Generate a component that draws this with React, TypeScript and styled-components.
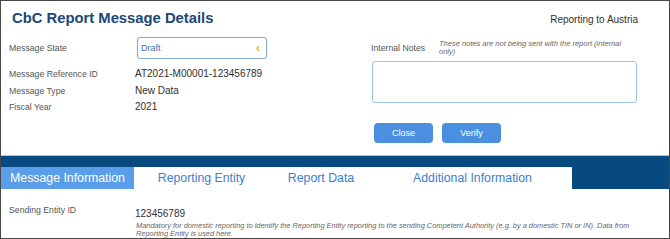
import React from "react";
import styled, { createGlobalStyle } from "styled-components";

const GlobalStyle = createGlobalStyle`
  html, body {
    margin: 0;
    padding: 0;
    background: #ffffff;
    font-family: "Liberation Sans", Arial, sans-serif;
  }
  * {
    box-sizing: border-box;
  }
`;

const colors = {
  navy: "#064a80",
  title: "#1a4877",
  label: "#555555",
  value: "#2f2f2f",
  hint: "#666666",
  tabText: "#3c7ed2",
  tabActive: "#5a9de8",
  button: "#4a8fe0",
};

const Frame = styled.div`
  width: 670px;
  height: 239px;
  border: 1px solid #474747;
  overflow: hidden;
  display: flex;
  flex-direction: column;
`;

const Top = styled.div`
  height: 154px;
  padding: 8px 31px 0 8px;
`;

const Header = styled.div`
  display: flex;
  justify-content: space-between;
  align-items: baseline;
  padding-left: 3px;
`;

const Title = styled.h1`
  margin: 0;
  font-size: 14.8px;
  line-height: 18px;
  font-weight: bold;
  color: ${colors.title};
`;

const Country = styled.span`
  font-size: 10px;
  line-height: 12px;
  color: #2f2f2f;
`;

const Columns = styled.div`
  display: grid;
  grid-template-columns: 362px 1fr;
  margin-top: 10px;
`;

const FieldList = styled.div`
  display: flex;
  flex-direction: column;
`;

const Field = styled.div<{ $tall?: boolean }>`
  display: grid;
  grid-template-columns: 126px 1fr;
  align-items: center;
  height: ${(p) => (p.$tall ? "22px" : "16.5px")};
  margin-bottom: ${(p) => (p.$tall ? "7px" : "0")};
`;

const Label = styled.span`
  font-size: 8.7px;
  color: ${colors.label};
`;

const Value = styled.span`
  font-size: 10px;
  line-height: 12px;
  color: ${colors.value};
`;

const Select = styled.div`
  width: 130px;
  height: 22px;
  margin-left: 2px;
  border: 1px solid #86acd9;
  border-radius: 3px;
  display: flex;
  align-items: center;
  justify-content: space-between;
  padding: 0 6px 0 3px;
  font-size: 9px;
  color: #3d6db3;
  box-shadow: 0 0 1px rgba(90, 140, 210, 0.4);
`;

const Chevron = styled.span`
  color: #e9b31f;
  font-size: 12px;
  font-weight: bold;
  line-height: 1;
`;

const Notes = styled.div`
  display: flex;
  flex-direction: column;
`;

const NotesHead = styled.div`
  display: flex;
  align-items: center;
  height: 22px;
  margin-bottom: 2px;
`;

const NotesLabel = styled(Label)`
  width: 68px;
  flex: none;
`;

const NotesHint = styled.span`
  font-size: 7.5px;
  line-height: 8px;
  font-style: italic;
  color: ${colors.hint};
  width: 196px;
`;

const TextArea = styled.div`
  width: 265px;
  height: 42px;
  margin-left: 1px;
  border: 1px solid #9cc2e6;
  border-radius: 3px;
`;

const Actions = styled.div`
  display: flex;
  gap: 9px;
  margin-top: 20px;
  padding-left: 3px;
`;

const Button = styled.button`
  width: 59px;
  height: 20px;
  border: none;
  border-radius: 4px;
  background: ${colors.button};
  color: #ffffff;
  font-family: "Liberation Sans", Arial, sans-serif;
  font-size: 9px;
  padding: 0;
`;

const Band = styled.div`
  border-top: 1px solid #a9c7e6;
  background: ${colors.navy};
  padding-top: 11px;
  display: flex;
`;

const TabList = styled.div`
  display: flex;
  background: #ffffff;
`;

const Tab = styled.div<{ $width: number; $active?: boolean }>`
  width: ${(p) => p.$width}px;
  height: 22px;
  line-height: 22px;
  text-align: center;
  font-size: 12.3px;
  white-space: nowrap;
  color: ${(p) => (p.$active ? "#ffffff" : colors.tabText)};
  background: ${(p) => (p.$active ? colors.tabActive : "transparent")};
`;

const Bottom = styled.div`
  padding: 14px 0 0 8px;
  display: grid;
  grid-template-columns: 126px 1fr;
  align-items: start;
`;

const BottomLabel = styled(Label)`
  line-height: 9px;
  margin-top: 3px;
`;

const Help = styled.p`
  margin: 1px 0 0 1px;
  width: 510px;
  font-size: 7.4px;
  line-height: 8px;
  font-style: italic;
  color: ${colors.hint};
`;

const tabs = [
  { name: "Message Information", width: 133, active: true },
  { name: "Reporting Entity", width: 135 },
  { name: "Report Data", width: 104 },
  { name: "Additional Information", width: 199 },
];

const App: React.FC = () => {
  return (
    <>
      <GlobalStyle />
      <Frame>
        <Top>
          <Header>
            <Title>CbC Report Message Details</Title>
            <Country>Reporting to Austria</Country>
          </Header>
          <Columns>
            <FieldList>
              <Field $tall>
                <Label>Message State</Label>
                <Select>
                  <span>Draft</span>
                  <Chevron>‹</Chevron>
                </Select>
              </Field>
              <Field>
                <Label>Message Reference ID</Label>
                <Value>AT2021-M00001-123456789</Value>
              </Field>
              <Field>
                <Label>Message Type</Label>
                <Value>New Data</Value>
              </Field>
              <Field>
                <Label>Fiscal Year</Label>
                <Value>2021</Value>
              </Field>
            </FieldList>
            <Notes>
              <NotesHead>
                <NotesLabel>Internal Notes</NotesLabel>
                <NotesHint>These notes are not being sent with the report (internal only)</NotesHint>
              </NotesHead>
              <TextArea />
              <Actions>
                <Button>Close</Button>
                <Button>Verify</Button>
              </Actions>
            </Notes>
          </Columns>
        </Top>
        <Band>
          <TabList>
            {tabs.map((t) => (
              <Tab key={t.name} $width={t.width} $active={t.active}>
                {t.name}
              </Tab>
            ))}
          </TabList>
        </Band>
        <Bottom>
          <BottomLabel>Sending Entity ID</BottomLabel>
          <div>
            <Value>123456789</Value>
            <Help>
              Mandatory for domestic reporting to identify the Reporting Entity reporting to the sending
              Competent Authority (e.g. by a domestic TIN or IN). Data from Reporting Entity is used here.
            </Help>
          </div>
        </Bottom>
      </Frame>
    </>
  );
};

export default App;
